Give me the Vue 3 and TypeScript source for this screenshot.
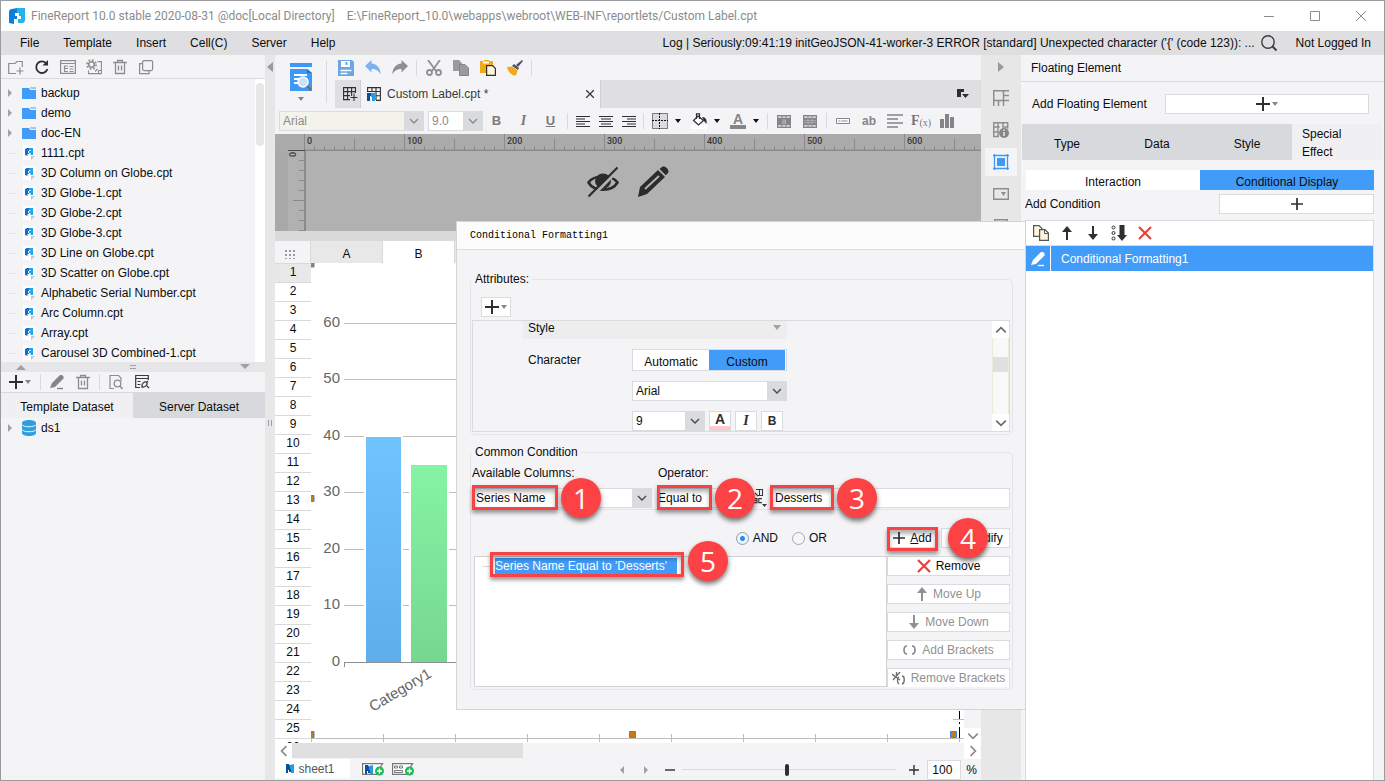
<script setup lang="ts">
import { ref } from 'vue'

interface TreeItem {
  name: string
  folder: boolean
}

const menus = ['File', 'Template', 'Insert', 'Cell(C)', 'Server', 'Help']

const tree: TreeItem[] = [
  { name: 'backup', folder: true },
  { name: 'demo', folder: true },
  { name: 'doc-EN', folder: true },
  { name: '1111.cpt', folder: false },
  { name: '3D Column on Globe.cpt', folder: false },
  { name: '3D Globe-1.cpt', folder: false },
  { name: '3D Globe-2.cpt', folder: false },
  { name: '3D Globe-3.cpt', folder: false },
  { name: '3D Line on Globe.cpt', folder: false },
  { name: '3D Scatter on Globe.cpt', folder: false },
  { name: 'Alphabetic Serial Number.cpt', folder: false },
  { name: 'Arc Column.cpt', folder: false },
  { name: 'Array.cpt', folder: false },
  { name: 'Carousel 3D Combined-1.cpt', folder: false },
]

const columns = ['A', 'B', 'C', 'D', 'E', 'F', 'G', 'H', 'I']
const rows = Array.from({ length: 26 }, (_, i) => i + 1)

const hTicks = Array.from({ length: 68 }, (_, i) => i * 10)
const vTicks = Array.from({ length: 9 }, (_, i) => i * 10)
const hLabels = hTicks.filter((t) => t % 100 === 0)

const axis = [60, 50, 40, 30, 20, 10, 0].map((value, i) => ({ value, y: [60, 116, 173, 229, 286, 342, 399][i] }))
const gridX = Array.from({ length: 24 }, (_, i) => i * 72)

const zoom = ref('100')
const zoomLevel = ref(49)
const join = ref('and')
const compare = ref('Desserts')
</script>

<template>
  <div class="window">
    <svg class="defs" aria-hidden="true">
      <symbol id="i-file" viewBox="0 0 12 14">
        <path d="M0 0h12v9l-4 5H0z" fill="#fff" />
        <path d="M8 14V10h4z" fill="#c4c6c9" />
        <path d="M2 3l2-1h2v3H5v2h1v1H4.500v2L2 9z" fill="#0b6fd0" />
        <path d="M6 2h4v7H7.500V7H6V5h1.500V4H6z" fill="#1fa5ea" />
      </symbol>
      <symbol id="i-logo" viewBox="0 0 16 16">
        <path d="M0 4c0-2 1-3 3-3l5-1v5H6v3h2v3H5v5l-5-1z" fill="#0a80d8" />
        <path d="M8 0h8v12c0 2-1 3-3 3H9v-4h3V8h-2V5H8z" fill="#27b0ee" />
      </symbol>
      <symbol id="i-finer" viewBox="0 0 8 9">
        <path d="M0 0h3l2 4v4H3V6H2v3H0z" fill="#0a4f9e" />
        <path d="M4 1l4-1v9H5V5H4z" fill="#1f9fe0" />
      </symbol>
      <symbol id="i-chev" viewBox="0 0 10 10">
        <path d="M1 3l4 4 4-4" fill="none" stroke="currentColor" stroke-width="1.4" />
      </symbol>
      <symbol id="i-plus" viewBox="0 0 14 14">
        <path d="M7 0v14M0 7h14" stroke="#2f2f31" stroke-width="2" />
      </symbol>
      <symbol id="i-caret" viewBox="0 0 6 4">
        <path d="M0 0h6L3 4z" fill="currentColor" />
      </symbol>
      <symbol id="i-x" viewBox="0 0 14 14">
        <path d="M1 1l12 12M13 1L1 13" stroke="#e8423c" stroke-width="2.2" />
      </symbol>
      <symbol id="i-up" viewBox="0 0 12 14">
        <path d="M6 14V3" stroke="currentColor" stroke-width="2" />
        <path d="M6 0l5 6H1z" fill="currentColor" />
      </symbol>
      <symbol id="i-trash" viewBox="0 0 16 16">
        <path d="M1 3.500h14M5.500 3V1.500h5V3M3.500 4v10.500h9V4M6.500 6.500v5M9.500 6.500v5" fill="none" stroke="#8d8d8f" stroke-width="1.3" />
      </symbol>
      <symbol id="i-pencil" viewBox="0 0 16 16">
        <path d="M1 14l2-5 7-7 1-1h2l1.500 1.500v2L13 6l-7 7z" fill="currentColor" />
        <path d="M8 14.500h6" stroke="currentColor" stroke-width="1.400" />
      </symbol>
    </svg>

    <header class="title">
      <svg width="16" height="16"><use href="#i-logo" /></svg>
      <span class="title-name">FineReport 10.0 stable 2020-08-31 @doc[Local Directory]</span>
      <span>E:\FineReport_10.0\webapps\webroot\WEB-INF\reportlets/Custom Label.cpt</span>
      <span class="grow"></span>
      <button class="win" aria-label="Minimize"><svg width="12" height="12"><path d="M1 6.500h10" stroke="#8b8b8b" /></svg></button>
      <button class="win" aria-label="Maximize"><svg width="12" height="12"><path d="M1.500 1.500h9v9h-9z" stroke="#8b8b8b" fill="none" /></svg></button>
      <button class="win" aria-label="Close"><svg width="12" height="12"><path d="M1 1l10 10M11 1L1 11" stroke="#8b8b8b" /></svg></button>
    </header>

    <nav class="menubar">
      <button v-for="m in menus" :key="m">{{ m }}</button>
      <span class="grow"></span>
      <span>Log | Seriously:09:41:19 initGeoJSON-41-worker-3 ERROR [standard] Unexpected character ('{' (code 123)): ...</span>
      <button class="search" aria-label="Search">
        <svg width="18" height="18"><circle cx="8" cy="8" r="6.200" fill="none" stroke="#3d3d3f" stroke-width="1.400" /><path d="M12.500 12.500l4 4" stroke="#3d3d3f" stroke-width="2" /></svg>
      </button>
      <button>Not Logged In</button>
    </nav>

    <div class="main">
      <aside class="left">
        <div class="tools">
          <button aria-label="New folder"><svg width="16" height="16"><path d="M8 14.500H.7v-10H7l2-2h5.300V8M12 8.500v7M8.500 12h7" fill="none" stroke="#8d8d8f" stroke-width="1.200" /></svg></button>
          <button aria-label="Refresh"><svg width="16" height="16"><path d="M12.500 4.500A5.800 5.800 0 1 0 13.500 10" fill="none" stroke="#2f2f31" stroke-width="1.800" /><path d="M14 1v5.500H8.500z" fill="#2f2f31" /></svg></button>
          <button aria-label="Open location"><svg width="16" height="16"><path d="M.6 1.600h14.800v12.800H.6zM.6 4.500h14.800M4 7h4M4 12.500h4M4.500 7v5M9.500 7.500h4M9.500 10h4M9.500 12.500h4M5 9.500h3" fill="none" stroke="#8d8d8f" stroke-width="1.200" /></svg></button>
          <button aria-label="Settings"><svg width="16" height="16"><circle cx="5.500" cy="5.500" r="2.800" fill="none" stroke="#8d8d8f" stroke-width="1.600" /><circle cx="5.500" cy="5.500" r="4.600" fill="none" stroke="#8d8d8f" stroke-width="1.600" stroke-dasharray="1.800 1.800" /><path d="M11.500 2.600h3.900v12H2.500v-3M9 12.500l2.500-2.500M12.500 14.500v-3h3" fill="none" stroke="#8d8d8f" stroke-width="1.100" /></svg></button>
          <button aria-label="Delete"><svg width="16" height="16"><use href="#i-trash" /></svg></button>
          <button aria-label="Copy"><svg width="16" height="16"><rect x="4.600" y="1.600" width="10" height="10" rx="1.500" fill="none" stroke="#8d8d8f" stroke-width="1.200" /><path d="M4 4.600H1.600v10h9.500V12" fill="none" stroke="#8d8d8f" stroke-width="1.200" /></svg></button>
        </div>
        <div class="tree-wrap">
          <ul class="tree">
            <li v-for="t in tree" :key="t.name">
              <svg class="twist" width="17" height="10"><path v-if="t.folder" d="M2 1l4 4-4 4z" fill="#a2a2a4" /><path v-else d="M2 5.500h8" stroke="#e7e7ea" /></svg>
              <svg v-if="t.folder" class="ico" width="14" height="12"><path d="M0 1h7l1.500 2H14v9H0z" fill="#419bf9" /><path d="M8 .5h6v1H9z" fill="#419bf9" /></svg>
              <svg v-else class="ico" width="14" height="14"><use href="#i-file" width="12" height="14" x="1" /></svg>
              <span>{{ t.name }}</span>
            </li>
          </ul>
          <div class="tree-scroll"><span></span></div>
        </div>
        <div class="hsplit">
          <svg width="10" height="6"><path d="M0 6l5-5 5 5z" fill="#a0a0a2" /></svg>
          <svg width="6" height="5"><path d="M0 .5h6M0 3.500h6" stroke="#a0a0a2" /></svg>
          <svg width="10" height="6"><path d="M0 0l5 5 5-5z" fill="#a0a0a2" /></svg>
        </div>
        <div class="tools data-tools">
          <button class="add-data" aria-label="Add dataset"><svg width="14" height="14"><use href="#i-plus" /></svg><svg class="gray" width="6" height="4"><use href="#i-caret" /></svg></button>
          <i class="sep"></i>
          <button aria-label="Edit"><svg class="gray" width="16" height="16"><use href="#i-pencil" /></svg></button>
          <button aria-label="Delete dataset"><svg width="16" height="16"><use href="#i-trash" /></svg></button>
          <i class="sep"></i>
          <button aria-label="Preview"><svg width="16" height="16"><path d="M6 14.500H2v-13h8.500L13 4v3" fill="none" stroke="#8d8d8f" stroke-width="1.200" /><circle cx="9.500" cy="9.500" r="3.300" fill="none" stroke="#8d8d8f" stroke-width="1.300" /><path d="M12 12l2.500 3" stroke="#8d8d8f" stroke-width="1.500" /></svg></button>
          <button aria-label="Connection"><svg width="16" height="16"><path d="M6 13.500H1.700v-12h12.600V6M1.700 4.500h12.600M3.500 7.500h3M3.500 10.500h3" fill="none" stroke="#3a3a3c" stroke-width="1.200" /><ellipse cx="10.500" cy="10.500" rx="3" ry="2" transform="rotate(-45 10.500 10.500)" fill="none" stroke="#3a3a3c" stroke-width="1.200" /><path d="M7.500 13.500l1.500-1.500M12.500 8.500l1.500-1.500M13 12l2 2" stroke="#3a3a3c" stroke-width="1.200" /></svg></button>
        </div>
        <div class="data-tabs">
          <button class="on">Template Dataset</button>
          <button>Server Dataset</button>
        </div>
        <ul class="tree flat">
          <li>
            <svg class="twist" width="17" height="10"><path d="M2 1l4 4-4 4z" fill="#a2a2a4" /></svg>
            <svg class="ico" width="14" height="16"><path d="M0 3c0-4 14-4 14 0v10c0 4-14 4-14 0z" fill="#2c9fe0" /><path d="M0 4.500c1 3 13 3 14 0M0 9.500c1 3 13 3 14 0" fill="none" stroke="#f4f4f7" /></svg>
            <span>ds1</span>
          </li>
        </ul>
      </aside>

      <div class="vsplit">
        <svg width="6" height="10"><path d="M6 0v10L0 5z" fill="#9a9a9c" /></svg>
        <svg width="4" height="6"><path d="M.5 0v6M3.500 0v6" stroke="#a0a0a2" /></svg>
        <span></span>
      </div>

      <section class="center">
        <div class="top">
          <button class="preview" aria-label="Preview template">
            <svg width="22" height="28"><path d="M0 0h22v4H0zM0 6h17l5 4v18H0z" fill="#3e98f8" /><path d="M17 6v4h5z" fill="#1672d6" /><path d="M4 12h13M4 16h6M4 20h5" stroke="#fff" stroke-width="2" /><circle cx="13" cy="19" r="5" fill="#c9e2fb" stroke="#fff" stroke-width="1.500" /><path d="M17 23l4 4" stroke="#7b6a58" stroke-width="2.200" /></svg>
            <svg class="gray" width="6" height="4"><use href="#i-caret" /></svg>
          </button>
          <div class="top-right">
            <div class="bar">
              <button aria-label="Save"><svg width="16" height="16"><path d="M0 0h14l2 2v14H0z" fill="#6ba6e6" /><path d="M3 1h9v6H3z" fill="#fff" /><path d="M8.500 2v3" stroke="#6ba6e6" stroke-width="2" /><path d="M2.500 10.500h11M2.500 13.500h7" stroke="#fff" stroke-width="1.300" /></svg></button>
              <button aria-label="Undo"><svg width="16" height="16"><path d="M0 6l6.500-6v3.500C12 4 15.500 8 15.700 14.500 13.500 10.500 11 9 6.500 9v3.500z" fill="#7cb2ee" /></svg></button>
              <button aria-label="Redo"><svg width="16" height="16"><path d="M16 6L9.500 0v3.500C4 4 .5 8 .3 14.500 2.500 10.500 5 9 9.500 9v3.500z" fill="#8f8f91" /></svg></button>
              <i class="sep"></i>
              <button aria-label="Cut"><svg width="16" height="16"><path d="M2 0l8 11M14 0L6 11" stroke="#8f8f91" stroke-width="1.800" /><circle cx="3.500" cy="12.500" r="2.500" fill="none" stroke="#8f8f91" stroke-width="1.800" /><circle cx="12.500" cy="12.500" r="2.500" fill="none" stroke="#8f8f91" stroke-width="1.800" /></svg></button>
              <button aria-label="Copy cell"><svg width="16" height="16"><path d="M0 0h6l3 3v8H0z" fill="#9b9b9d" /><path d="M6.500 4.500h5.500l3.500 3.500v7.500h-9z" fill="#9b9b9d" stroke="#858587" /></svg></button>
              <button aria-label="Paste"><svg width="16" height="16"><path d="M0 1h4V0h5v1h4v12H0z" fill="#f0a91b" /><path d="M3 1.500h6v2H3z" fill="#fff" /><path d="M6.600 5.600h6l2.800 3v6.800H6.600z" fill="#fff6dc" stroke="#2f2f31" stroke-width="1.200" /></svg></button>
              <button aria-label="Format brush"><svg width="16" height="16"><path d="M15 0l1 1-5 6-2-2z" fill="#4d5366" /><path d="M7 4l5 4-1 2-6-4z" fill="#4d5366" /><path d="M5 6.500l5.500 4-1.500 5C5 16 1 12 0 7z" fill="#f0a91b" /></svg></button>
              <i class="sep"></i>
            </div>
            <div class="tabs">
              <button class="new-tab" aria-label="New template"><svg width="16" height="14"><path d="M1 .6h13M1 4.600h13M1 8.600h7M1 12.600h7M1.600 0v13M5.600 0v13M9.600 0v9M13.500 0v6M12 6.500v7.500M8.500 10.500h7" stroke="#2f2f31" stroke-width="1.100" /></svg></button>
              <div class="doc-tab">
                <svg width="14" height="14"><path d="M.6 4.500V.6h12.800v12.800H9M0 4.500h13M5 .6v4M9 .6v12.400M9 8.700h4.500" fill="none" stroke="#2f2f31" stroke-width="1.100" /><path d="M0 6h4v3H3v5H0z" fill="#0a4f9e" /><path d="M4 6h4v8H5v-4H4z" fill="#1f9fe0" /></svg>
                <span>Custom Label.cpt *</span>
                <button aria-label="Close tab"><svg width="8" height="8"><path d="M0 0l8 8M8 0L0 8" stroke="#3a3a3c" stroke-width="1.300" /></svg></button>
              </div>
              <span class="grow"></span>
              <button class="tab-list" aria-label="Open templates"><svg width="12" height="10"><path d="M0 0h7v3H4v5H0z" fill="#2f2f31" /><path d="M5 5h7L8.500 9z" fill="#2f2f31" /></svg></button>
            </div>
          </div>
        </div>

        <div class="format">
          <label class="combo font"><select aria-label="Font" disabled><option>Arial</option></select><b><svg width="10" height="10"><use href="#i-chev" /></svg></b></label>
          <label class="combo size"><select aria-label="Font size" disabled><option>9.0</option></select><b><svg width="10" height="10"><use href="#i-chev" /></svg></b></label>
          <button class="f27 bold">B</button>
          <button class="f27 ital">I</button>
          <button class="f27 under">U</button>
          <i class="sep"></i>
          <button class="f23" aria-label="Align left"><svg width="14" height="11"><path d="M0 .5h14M0 3h9M0 5.500h14M0 8h9M0 10.500h14" stroke="#2f2f31" /></svg></button>
          <button class="f23" aria-label="Align center"><svg width="14" height="11"><path d="M0 .5h14M2 3h10M0 5.500h14M2 8h10M0 10.500h14" stroke="#2f2f31" /></svg></button>
          <button class="f23" aria-label="Align right"><svg width="14" height="11"><path d="M0 .5h14M5 3h9M0 5.500h14M5 8h9M0 10.500h14" stroke="#2f2f31" /></svg></button>
          <i class="sep"></i>
          <button class="f39" aria-label="Border"><svg width="16" height="16"><path d="M.5.500h15v15H.5z" fill="#dcdcde" stroke="#111" stroke-dasharray="1 1" /><path d="M7.500 0v16M0 7.500h16" stroke="#111" stroke-dasharray="2 1" /></svg><svg class="dark" width="6" height="4"><use href="#i-caret" /></svg></button>
          <button class="f39" aria-label="Fill"><svg width="16" height="16"><path d="M0 12h16v4H0z" fill="#fff" /><path d="M7 3l5.500 4.500L7.500 12 2.500 7.500z" fill="#fff" stroke="#2f2f31" stroke-width="1.200" /><path d="M5.500 6V.800h3V6" fill="none" stroke="#2f2f31" stroke-width="1.200" /><path d="M11 4c4 0 5 3 4.500 7l-2.500-3z" fill="#2f2f31" /></svg><svg class="dark" width="6" height="4"><use href="#i-caret" /></svg></button>
          <button class="f39" aria-label="Font color"><span class="acolor">A</span><svg class="dark" width="6" height="4"><use href="#i-caret" /></svg></button>
          <i class="sep"></i>
          <button class="f26" aria-label="Merge"><svg width="14" height="13"><path d="M.6.600h12.800v11.800H.6z" fill="#d4d4d6" stroke="#858587" stroke-width="1.200" /><path d="M1 3h12v7H1z" fill="#858587" /><path d="M5 0v3M9 0v3M5 10v3M9 10v3" stroke="#858587" /><path d="M5.500 5h3v3.500h-3v-2h3" fill="none" stroke="#b4b4b6" /></svg></button>
          <button class="f26" aria-label="Unmerge"><svg width="14" height="13"><path d="M.6.600h12.800v11.800H.6z" fill="#d4d4d6" stroke="#858587" stroke-width="1.200" /><path d="M1 3h12v7H1z" fill="#858587" /><path d="M5 0v3M9 0v3M5 10v3M9 10v3" stroke="#858587" /><path d="M5 3v7M9 3v7M1 5.500h12M1 7.500h12" stroke="#bcbcbe" stroke-width=".6" /></svg></button>
          <i class="sep"></i>
          <button class="f26" aria-label="Widget"><svg width="14" height="6"><path d="M.5.500h13v5H.5z" fill="#fff" stroke="#858587" /><path d="M2.500 3h2M5.500 3h6" stroke="#858587" stroke-width="1.200" /></svg></button>
          <button class="f26 ab">ab</button>
          <button class="f26" aria-label="Rich text"><svg width="16" height="14"><path d="M0 1h16M0 5h11M0 9h16M0 13h11" stroke="#858587" stroke-width="1.500" /></svg></button>
          <button class="f26 fx">F<small>(x)</small></button>
          <button class="f26" aria-label="Chart"><svg width="14" height="14"><path d="M0 5h4v9H0zM5 0h4v14H5zM10 3h4v11h-4z" fill="#858587" /></svg></button>
        </div>

        <div class="stage">
          <svg class="ruler-h" height="20">
            <path d="M29.500 0v17M13 16.500h17" stroke="#4c4c4e" />
            <path d="M30 16.500h4000" stroke="#8a8a8a" stroke-width="2" />
            <path v-for="t in hTicks" :key="t" :d="`M${t + 29.5} ${t % 100 === 0 ? 0 : t % 50 === 0 ? 5 : 12}V16`" stroke="#8a8a8a" />
            <text v-for="l in hLabels" :key="l" :x="l + 32" y="10">{{ l }}</text>
          </svg>
          <div class="stage-row">
            <svg class="ruler-v" width="31">
              <path d="M0 0h13v100H0z" fill="#a9a9a9" />
              <path d="M30 0v100" stroke="#8a8a8a" stroke-width="2" />
              <path v-for="t in vTicks" :key="t" :d="`M${t % 50 === 0 ? 18 : 24} ${t - 0.5}H29`" stroke="#8a8a8a" />
              <text transform="translate(21 6) rotate(-90)">0</text>
            </svg>
          </div>
          <div class="overlay">
            <svg width="32" height="32" viewBox="0 0 32 32"><path d="M1.500 16.500C7 8.500 25 8.500 30.500 16.500 25 26 7 26 1.500 16.500z" fill="none" stroke="#2b2b2b" stroke-width="2.600" /><path d="M8 15a8 7.500 0 0 1 16 0 8 7.500 0 0 1-16 0z" fill="#2b2b2b" /><path d="M32 3.500L4 31.500" stroke="#b1b1b1" stroke-width="3" /><path d="M30.500 1.500L1.500 30.500" stroke="#2b2b2b" stroke-width="2.200" /></svg>
            <svg width="32" height="32" viewBox="0 0 32 32"><path d="M1 31l2-10L21 4l7 7L10 28z" fill="#2b2b2b" /><path d="M8 23L22 10" stroke="#b1b1b1" stroke-width="2" /><path d="M22.500 3L25 1c3-2 8 3 6 6l-2.500 2.500z" fill="#2b2b2b" /><path d="M22 3.500l6.500 6.500" stroke="#b1b1b1" stroke-width="1.300" /></svg>
          </div>
        </div>

        <div class="sheet">
          <div class="cols">
            <span class="corner"><svg width="11" height="9"><path d="M0 1h11M0 5h11M0 9h11" stroke="#9b9b9d" stroke-width="2" stroke-dasharray="2 2" /></svg></span>
            <span v-for="c in columns" :key="c" class="col" :class="{ sel: c === 'B' }">{{ c }}</span>
          </div>
          <div class="cells">
            <ol class="rows"><li v-for="r in rows" :key="r">{{ r }}</li></ol>
            <svg class="chart">
              <defs>
                <linearGradient id="g-blue" x2="0" y2="1"><stop offset="0" stop-color="#6fc3ff" /><stop offset="1" stop-color="#5faeea" /></linearGradient>
                <linearGradient id="g-green" x2="0" y2="1"><stop offset="0" stop-color="#85f3a4" /><stop offset="1" stop-color="#76d890" /></linearGradient>
              </defs>
              <g v-for="a in axis" :key="a.value">
                <path :d="`M33 ${a.y + 0.5}H640`" :stroke="a.value ? '#bfbfbf' : '#8e8e8e'" />
                <text x="29" :y="a.y + 4" text-anchor="end">{{ a.value }}</text>
              </g>
              <path d="M33.500 399v5" stroke="#8e8e8e" />
              <path d="M53 172h39v227H53zM98 200h40v199H98z" fill="#fff" />
              <path d="M55 174h35v225H55z" fill="url(#g-blue)" />
              <path d="M100 202h36v197h-36z" fill="url(#g-green)" />
              <text transform="translate(62 449) rotate(-31)">Category1</text>
              <path d="M0 475.500h653" stroke="#bdbdbd" />
              <path v-for="g in gridX" :key="g" :d="`M${g + 0.5} 471v9`" stroke="#bdbdbd" />
              <path d="M642 456.500h12" stroke="#bdbdbd" />
              <path d="M648.500 448v8M648.500 459v2M648.500 464v11" stroke="#000" stroke-width="1" />
              <path d="M-4-4h7v8h-7zM-4 232.500h7v6h-7zM-4 468.500h7v6h-7zM318.500 468.500h6v6h-6zM639.500 468.500h6v6h-6z" fill="#c87a0c" stroke="#3b85e6" />
            </svg>
            <div class="vscroll"><button aria-label="Scroll down"><svg width="12" height="12"><use href="#i-chev" /></svg></button></div>
          </div>
        </div>

        <div class="hscroll">
          <button aria-label="Scroll left"><svg class="rl" width="12" height="12"><use href="#i-chev" /></svg></button>
          <span class="thumb"></span>
          <span class="grow"></span>
          <button aria-label="Scroll right"><svg class="rr" width="12" height="12"><use href="#i-chev" /></svg></button>
        </div>
        <footer class="status">
          <button class="sheet-tab"><svg width="8" height="9"><use href="#i-finer" /></svg>sheet1</button>
          <button class="add-sheet" aria-label="Add sheet"><svg width="22" height="13"><path d="M.6.600h20L18 5v6.400H.6z" fill="#fff" stroke="#77777a" stroke-width="1.200" /><use href="#i-finer" x="3" y="2" width="8" height="9" /><circle cx="17.500" cy="8" r="4.500" fill="#1fb956" /><path d="M17.500 5.500v5M15 8h5" stroke="#fff" stroke-width="1.400" /></svg></button>
          <button class="add-sheet" aria-label="Add form"><svg width="22" height="13"><path d="M.6.600h20L18 5v6.400H.6z" fill="#fff" stroke="#77777a" stroke-width="1.200" /><path d="M2.500 3h3v2h-3zM7.500 3h3v2h-3zM2.500 7.500h8v2h-8z" fill="none" stroke="#77777a" /><circle cx="17.500" cy="8" r="4.500" fill="#1fb956" /><path d="M17.500 5.500v5M15 8h5" stroke="#fff" stroke-width="1.400" /></svg></button>
          <span class="grow"></span>
          <button class="nav" aria-label="Previous sheet"><svg width="4" height="8"><path d="M4 0v8L0 4z" fill="#a2a2a4" /></svg></button>
          <button class="nav" aria-label="Next sheet"><svg width="4" height="8"><path d="M0 0v8l4-4z" fill="#a2a2a4" /></svg></button>
          <button class="nav" aria-label="Zoom out"><svg width="10" height="10"><path d="M0 5h10" stroke="#2f2f31" stroke-width="1.400" /></svg></button>
          <input v-model="zoomLevel" class="slider" type="range" min="0" max="100" aria-label="Zoom" />
          <button class="nav" aria-label="Zoom in"><svg width="10" height="10"><path d="M0 5h10M5 0v10" stroke="#2f2f31" stroke-width="1.400" /></svg></button>
          <label class="pct"><input v-model="zoom" aria-label="Zoom percent" />%</label>
        </footer>
      </section>

      <nav class="strip">
        <button class="fold" aria-label="Collapse panel"><svg width="6" height="10"><path d="M0 0v10l6-5z" fill="#9a9a9c" /></svg></button>
        <button aria-label="Cell element"><svg width="16" height="16"><path d="M16 .700H.7V16M10.500.700v9.800H1M16 5.500h-5M16 10.500h-5M5.500 10.500V16M10.500 10.500V16" fill="none" stroke="#8d8d8f" stroke-width="1.500" /></svg></button>
        <button aria-label="Cell attributes"><svg width="16" height="16"><path d="M6 14.500H.7V.700h14v6M.7 5h6M.7 10h4M5 .7v14M10 .7v5M10 5h5" fill="none" stroke="#8d8d8f" stroke-width="1.400" /><circle cx="11" cy="11" r="5" fill="#858587" /><path d="M11 7.500v1.500M11 10v4" stroke="#e8e8e8" stroke-width="1.500" /></svg></button>
        <button class="on" aria-label="Floating element"><svg width="16" height="16"><path d="M0 1.500h16M0 14.500h16M1.500 0v16M14.500 0v16" stroke="#3e98f8" stroke-width="1.300" /><path d="M4 4h8v8H4z" fill="#3e98f8" /></svg></button>
        <button aria-label="Widget settings"><svg width="16" height="12"><path d="M.7.700h14.600v10.600H.7z" fill="none" stroke="#8d8d8f" stroke-width="1.400" /><path d="M8 4h5l-2.500 4z" fill="#8d8d8f" /></svg></button>
        <button aria-label="Conditions"><svg width="14" height="14"><path d="M.7.700h12.600v12.600H.7z" fill="none" stroke="#8d8d8f" stroke-width="1.400" /></svg></button>
      </nav>

      <aside class="right">
        <h2>Floating Element</h2>
        <div class="add-float"><span>Add Floating Element</span><button class="box" aria-label="Add floating element"><svg width="14" height="14"><use href="#i-plus" /></svg><svg class="gray" width="6" height="4"><use href="#i-caret" /></svg></button></div>
        <div class="ptabs"><button>Type</button><button>Data</button><button>Style</button><button class="on">Special Effect</button></div>
        <div class="subtabs"><button>Interaction</button><button class="on">Conditional Display</button></div>
        <div class="add-cond"><span>Add Condition</span><button class="box" aria-label="Add condition"><svg width="12" height="12"><use href="#i-plus" /></svg></button></div>
        <div class="cond-list">
          <div class="cond-tools">
            <button aria-label="Copy condition"><svg width="16" height="16"><path d="M.6.600h5.400l3 3v7.800H.6z" fill="#fff6dc" stroke="#55555a" stroke-width="1.200" /><path d="M6.600 4.600h5.400l3.400 3.400v7.400H6.600z" fill="#fff6dc" stroke="#55555a" stroke-width="1.200" /><path d="M11.500 4.600v4h4" fill="none" stroke="#55555a" /></svg></button>
            <button aria-label="Move condition up"><svg width="12" height="14"><use href="#i-up" /></svg></button>
            <button aria-label="Move condition down"><svg class="flip" width="12" height="14"><use href="#i-up" /></svg></button>
            <button aria-label="Sort"><svg width="16" height="16"><path d="M8.500 0h5v10H16l-5 6-5-6h2.500z" fill="#2f2f31" /><circle cx="2.500" cy="2.500" r="1.500" fill="none" stroke="#2f2f31" /><circle cx="2.500" cy="8" r="1.500" fill="none" stroke="#2f2f31" /><circle cx="2.500" cy="13.500" r="1.500" fill="none" stroke="#2f2f31" /></svg></button>
            <button aria-label="Delete condition"><svg width="14" height="14"><use href="#i-x" /></svg></button>
          </div>
          <div class="cond-item"><span class="pen"><svg width="16" height="16"><use href="#i-pencil" /></svg></span><span>Conditional Formatting1</span></div>
        </div>
      </aside>
    </div>

    <div class="dialog" role="dialog" aria-label="Conditional Formatting1">
      <h1>Conditional Formatting1</h1>
      <div class="dialog-body">
        <fieldset>
          <legend>Attributes:</legend>
          <button class="box attr-add" aria-label="Add attribute"><svg width="14" height="14"><use href="#i-plus" /></svg><svg class="gray" width="6" height="4"><use href="#i-caret" /></svg></button>
          <div class="attrs">
            <div class="attr-form">
              <div class="style-head"><span>Style</span><svg width="8" height="5"><path d="M0 0h8L4 5z" fill="#a2a2a4" /></svg></div>
              <div class="attr-grid">
                <span class="char">Character</span>
                <div class="seg"><button>Automatic</button><button class="on">Custom</button></div>
                <label class="combo"><select aria-label="Font family"><option>Arial</option></select><b><svg width="10" height="10"><use href="#i-chev" /></svg></b></label>
                <div class="font-row">
                  <label class="combo nine"><select aria-label="Size"><option>9</option></select><b><svg width="10" height="10"><use href="#i-chev" /></svg></b></label>
                  <button class="box a">A</button><button class="box ital">I</button><button class="box bold">B</button>
                </div>
              </div>
            </div>
            <div class="mini-scroll">
              <button aria-label="Scroll up"><svg class="flip" width="12" height="12"><use href="#i-chev" /></svg></button>
              <div><span></span></div>
              <button aria-label="Scroll attributes down"><svg width="12" height="12"><use href="#i-chev" /></svg></button>
            </div>
          </div>
        </fieldset>

        <fieldset class="common">
          <legend>Common Condition</legend>
          <div class="fields labels"><label for="col">Available Columns:</label><label for="op">Operator:</label></div>
          <div class="fields inputs">
            <div class="combo"><select id="col"><option>Series Name</option></select><b><svg width="10" height="10"><use href="#i-chev" /></svg></b></div>
            <div class="combo"><select id="op"><option>Equal to</option></select><b><svg width="10" height="10"><use href="#i-chev" /></svg></b></div>
            <button class="type" aria-label="Value type"><svg width="18" height="20"><path d="M5 1.500h6.500v6H6M8.500 1.500v6M4 5l3 3" fill="none" stroke="#3a3a3c" stroke-width="1.100" /><path d="M3 10.600h3v4H3M3 12.500h3M11 10.600H7.800v4H11" fill="none" stroke="#3a3a3c" stroke-width="1.100" /><path d="M11 16h5l-2.500 3z" fill="#3a3a3c" /></svg></button>
            <input v-model="compare" aria-label="Value" />
          </div>
          <div class="join">
            <label><input v-model="join" type="radio" name="join" value="and" />AND</label>
            <label><input v-model="join" type="radio" name="join" value="or" />OR</label>
            <button class="box add"><svg width="12" height="12"><use href="#i-plus" /></svg><span><u>A</u>dd</span></button>
            <button class="box modify"><svg width="14" height="14"><use href="#i-pencil" /></svg><span>Modify</span></button>
          </div>
          <div class="result">
            <ul><li><span>Series Name Equal to 'Desserts'</span></li></ul>
            <div class="side">
              <button class="box"><svg width="14" height="14"><use href="#i-x" /></svg>Remove</button>
              <button class="box" disabled><svg width="12" height="14"><use href="#i-up" /></svg>Move Up</button>
              <button class="box" disabled><svg class="flip" width="12" height="14"><use href="#i-up" /></svg>Move Down</button>
              <button class="box" disabled><svg width="14" height="10"><path d="M4 1C1 1 1 3 1 5s0 4 3 4M9 1c3 0 3 2 3 4s0 4-3 4" fill="none" stroke="#858587" stroke-width="1.600" /></svg>Add Brackets</button>
              <button class="box" disabled><svg width="14" height="13"><path d="M0 2l8 6M8 0L1 8M4.500 0v4M7 5c-2 1-2 6 0 7M10 4c3 0 3 7 0 8" fill="none" stroke="#6f6f71" stroke-width="1.400" /></svg>Remove Brackets</button>
            </div>
          </div>
        </fieldset>
      </div>

      <div class="mark m1"></div><div class="mark m2"></div><div class="mark m3"></div><div class="mark m4"></div><div class="mark m5"></div>
      <span class="badge b1">1</span><span class="badge b2">2</span><span class="badge b3">3</span><span class="badge b4">4</span><span class="badge b5">5</span>
    </div>
  </div>
</template>

<style>
html, body { margin: 0; height: 100%; overflow: hidden; }
</style>

<style scoped>
.window { position: relative; box-sizing: border-box; height: 100vh; display: flex; flex-direction: column; border: 1px solid #9b9b9d; background: #f4f4f7; color: #0c0c0e; font: 12px/16px "Liberation Sans", Arial, sans-serif; overflow: hidden; }
.window *, .window *::before { box-sizing: border-box; }
.defs { position: absolute; width: 0; height: 0; }
svg { display: block; flex: none; }
button { border: 0; padding: 0; margin: 0; background: none; color: inherit; font: inherit; display: flex; align-items: center; justify-content: center; white-space: nowrap; }
input, select { font: inherit; color: inherit; margin: 0; min-width: 0; }
ul, ol { list-style: none; margin: 0; padding: 0; }
h1, h2 { margin: 0; font: inherit; }
.grow { flex: 1; }
.gray { color: #858587; }
.dark { color: #111; }
.flip { transform: rotate(180deg); }
.sep { flex: none; width: 1px; background: #dadade; }
.box { height: 20px; background: #fff; border: 1px solid #dadbdf; }

.title { flex: none; height: 30px; background: #fff; display: flex; align-items: center; padding-left: 8px; color: #8b8b8b; font-family: Roboto, "Noto Sans", sans-serif; font-size: 12px; white-space: nowrap; }
.title-name { margin: 0 12px 0 6px; }
.win { width: 46px; height: 30px; }
.menubar { flex: none; height: 24px; background: #dfdfe1; display: flex; align-items: center; gap: 24px; padding: 0 13px 0 19px; white-space: nowrap; }
.search { margin: 0 -6px 0 -19px; }
.main { flex: 1; min-height: 0; display: flex; }

.left { flex: none; width: 264px; display: flex; flex-direction: column; }
.tools { flex: none; height: 24px; display: flex; align-items: center; padding-left: 2px; border-bottom: 1px solid #dadade; }
.tools button { width: 26px; height: 20px; }
.tree-wrap { flex: none; height: 283px; display: flex; }
.tree { flex: 1; padding-top: 4px; overflow: hidden; }
.tree.flat { padding: 0; }
.tree li { display: flex; align-items: center; height: 20px; padding-left: 5px; white-space: nowrap; }
.twist { margin-right: -1px; }
.ico { margin-right: 5px; }
.tree-scroll { width: 10px; background: #fff; padding: 4px 1px; }
.tree-scroll span { display: block; height: 63px; border-radius: 4px; background: #e7e7e9; }
.hsplit { flex: none; height: 10px; background: #e6e6e8; display: flex; align-items: center; justify-content: space-between; padding: 0 15px; }
.data-tools { height: 21px; }
.data-tools .add-data { width: 34px; gap: 2px; }
.data-tools .sep { height: 16px; margin: 0 3px; }
.data-tabs { flex: none; display: flex; height: 25px; }
.data-tabs button { flex: 1; background: #d8d9dd; padding-top: 2px; }
.data-tabs .on { background: #f0f0f2; }

.vsplit { flex: none; width: 10px; background: #e7e7e8; display: flex; flex-direction: column; align-items: center; justify-content: space-between; padding: 7px 0; }

.center { flex: 1; min-width: 0; display: flex; flex-direction: column; }
.top { flex: none; display: flex; height: 53px; }
.preview { flex: none; width: 52px; height: 42px; margin: 6px 5px 0 0; border-right: 1px solid #dadade; flex-direction: column; gap: 6px; }
.top-right { flex: 1; min-width: 0; margin-left: 3px; }
.bar { display: flex; height: 25px; align-items: center; margin-left: -3px; }
.bar button { width: 27px; }
.bar .sep { height: 16px; margin: 0 3px; }
.tabs { display: flex; height: 28px; background: #dfdfe1; }
.new-tab { width: 26px; padding-left: 4px; border-right: 1px solid #cfcfd2; }
.doc-tab { display: flex; align-items: center; width: 240px; background: #f4f4f7; border-right: 1px solid #cfcfd2; padding: 0 6px 0 6px; gap: 6px; color: #3a3a3c; }
.doc-tab span { flex: 1; }
.tab-list { width: 36px; }
.format { flex: none; height: 26px; display: flex; align-items: center; padding-left: 4px; }
.format .sep { height: 16px; margin: 0 3px; }
.combo { display: grid; height: 20px; min-width: 0; }
.combo select { grid-area: 1 / 1; width: 100%; height: 20px; appearance: none; border: 1px solid #dadbdf; border-radius: 0; background: #fff; padding: 0 20px 0 3px; opacity: 1; }
.combo b { grid-area: 1 / 1; justify-self: end; width: 20px; background: #dadbdf; display: flex; align-items: center; justify-content: center; color: #48484a; pointer-events: none; }
.format .combo select, .format .combo b { color: #8b8b8d; }
.combo.font { width: 145px; margin-right: 4px; }
.format .combo.font select { background: #f4f3e9; }
.combo.size { width: 55px; }
.f27 { width: 27px; color: #7b7b7d; font-size: 13px; }
.f23 { width: 23px; }
.f26 { width: 26px; }
.f39 { width: 39px; gap: 7px; }
.bold { font-weight: bold; }
.ital { font-family: "Liberation Serif", serif; font-style: italic; font-weight: bold; font-size: 14px; }
.under { text-decoration: underline; font-weight: bold; }
.acolor { width: 16px; height: 16px; border-bottom: 4px solid #858587; color: #858587; font-weight: bold; font-size: 14px; line-height: 12px; text-align: center; }
.ab { font-weight: bold; color: #858587; }
.fx { font-family: "Liberation Serif", serif; color: #77777a; font-size: 14px; font-weight: bold; }
.fx small { font-size: 10px; font-weight: normal; padding-top: 3px; }

.stage { position: relative; flex: none; background: #b1b1b1; height: 97px; overflow: hidden; }
.ruler-h { width: 100%; background: #ababab; height: 17px; }
.stage text { font: 500 9px Roboto, sans-serif; fill: #38383a; }
.stage-row { height: 80px; }
.ruler-v { height: 80px; }
.overlay { position: absolute; inset: 0; display: flex; align-items: center; justify-content: center; gap: 18px; padding-bottom: 2px; }

.sheet { flex: 1; min-height: 0; display: flex; flex-direction: column; background: #fff; border-top: 10px solid #dadadc; }
.cols { flex: none; height: 23px; display: flex; overflow: hidden; padding-right: 17px; background: #f4f4f7; }
.corner, .col { flex: none; width: 72px; display: flex; align-items: center; justify-content: center; background: #e8e8e9; border-right: 1px solid #d9d9db; border-bottom: 1px solid #fff; padding-top: 3px; }
.corner { width: 36px; background: #f4f4f7; border-bottom-color: #d9d9db; padding: 4px 5px 0 0; }
.col.sel { background: #fff; }
.cells { flex: 1; min-height: 0; display: flex; }
.rows { flex: none; width: 36px; height: 100%; overflow: hidden; }
.rows li { height: 19px; border-bottom: 1px solid #d9d9db; text-align: center; line-height: 17px; }
.rows li:first-child { background: #e8e8e9; }
.chart { flex: 1; min-width: 0; width: 0; height: 100%; margin-top: -1px; overflow: hidden; }
.chart text { font-size: 15px; fill: #666; }
.vscroll { flex: none; width: 17px; background: #f4f4f7; display: flex; align-items: flex-end; color: #8b8b8d; }
.vscroll button { width: 17px; height: 15px; background: #fff; }
.hscroll { flex: none; height: 16px; display: flex; color: #8b8b8d; }
.hscroll button { width: 17px; background: #fff; }
.thumb { width: 231px; background: #e0e0e1; height: 15px; }
.rl { transform: rotate(90deg); }
.rr { transform: rotate(-90deg); }
.status { flex: none; height: 21px; display: flex; align-items: center; }
.sheet-tab { width: 75px; height: 19px; background: #fff; gap: 4px; margin-right: 8px; padding-right: 4px; align-self: flex-start; color: #55555a; }
.add-sheet { width: 30px; }
.nav { width: 24px; height: 20px; }
.slider { appearance: none; width: 214px; height: 12px; background: linear-gradient(#dadade, #dadade) center / 100% 1px no-repeat; }
.slider::-webkit-slider-thumb { appearance: none; width: 4px; height: 12px; border-radius: 2px; background: #2f2f31; }
.nav + .slider { margin: 0 6px 0 0; }
.pct { display: flex; align-items: center; gap: 5px; padding-right: 4px; }
.pct input { width: 34px; height: 20px; border: 1px solid #dadbdf; background: #fff; padding: 0 4px; margin-left: 1px; }

.strip { flex: none; width: 40px; background: #e7e7e8; display: flex; flex-direction: column; align-items: center; gap: 4px; }
.strip button { flex: none; width: 32px; height: 28px; }
.strip .fold { height: 24px; margin-bottom: 1px; }
.strip .on { background: #f4f4f7; }

.right { flex: none; width: 363px; display: flex; flex-direction: column; }
.right h2 { height: 27px; line-height: 26px; padding-left: 10px; border-bottom: 1px solid #dadade; }
.add-float { display: flex; align-items: center; padding: 12px 15px 10px 11px; justify-content: space-between; }
.add-float .box { width: 204px; gap: 2px; }
.ptabs { display: flex; height: 36px; margin: 0 2px 0 1px; }
.ptabs button { flex: none; width: 25%; background: #d8d9dd; padding-top: 4px; }
.ptabs .on { background: #f0f0f2; white-space: normal; text-align: left; line-height: 18px; padding: 2px 30px 0 10px; }
.subtabs { display: flex; height: 20px; margin: 10px 10px 0 5px; }
.subtabs button { flex: 1; background: #fff; padding-top: 3px; }
.subtabs .on, .seg .on { background: #419bf9; }
.add-cond { display: flex; justify-content: space-between; align-items: center; margin: 4px 10px 6px 4px; }
.add-cond .box { width: 155px; }
.cond-list { flex: 1; margin: 0 10px 0 4px; border: 1px solid #dadbdf; border-bottom: 0; background: #fff; }
.cond-tools { display: flex; height: 25px; align-items: center; padding-left: 2px; border-bottom: 1px solid #dadbdf; color: #2f2f31; }
.cond-tools button { width: 26px; }
.cond-item { display: flex; align-items: center; height: 25px; background: #419bf9; color: #fff; }
.pen { display: flex; align-items: center; justify-content: center; width: 25px; height: 25px; border-right: 1px solid #fff; margin-right: 10px; }

.dialog { position: absolute; left: 455px; top: 220px; width: 570px; background: #f4f4f7; border: 1px solid #d4d4d7; }
.dialog h1 { height: 28px; background: #fcfcfc; border-bottom: 1px solid #dadade; padding-left: 13px; font: 10px/27px "Liberation Mono", monospace; color: #000; }
.dialog-body { padding: 22px 12px 19px 13px; display: flex; flex-direction: column; gap: 10px; }
fieldset { min-width: 0; margin: 0; padding: 0 2px 2px 1px; border: 1px solid #e5e5e8; border-radius: 5px; }
legend { height: 15px; line-height: 15px; padding: 0 3px; }
.attr-add { width: 30px; margin: 10px 0 3px 9px; gap: 2px; }
.attrs { display: flex; justify-content: space-between; height: 112px; border: 1px solid #dadbdf; overflow: hidden; }
.attr-form { width: 264px; margin-left: 50px; }
.style-head { display: flex; justify-content: space-between; height: 18px; background: #ededee; padding: 0 6px 0 5px; line-height: 15px; }
.style-head svg { margin-top: 4px; }
.attr-grid { display: grid; grid-template-columns: 109px 1fr; row-gap: 10px; margin-top: 10px; }
.char { padding: 3px 5px; }
.attr-grid > .combo, .font-row { grid-column: 2; }
.seg { display: flex; height: 22px; border: 1px solid #dadbdf; background: #fff; padding-right: 1px; }
.seg button { flex: 1; padding-top: 3px; }
.font-row { display: flex; gap: 4px; }
.font-row .nine { width: 73px; }
.font-row .box { width: 22px; color: #2f2f31; }
.font-row .a { font-weight: bold; font-size: 14px; line-height: 14px; box-shadow: inset 0 -5px 0 -1px #ffc9c9; align-items: flex-start; }
.mini-scroll { width: 17px; display: flex; flex-direction: column; color: #6b6b6d; }
.mini-scroll button { height: 17px; background: #fff; }
.mini-scroll div { flex: 1; background: #f9f9f8; border: solid #ebe9d8; border-width: 0 1px; padding-top: 19px; }
.mini-scroll span { display: block; height: 15px; background: #e0e0e1; }
.fields { display: grid; grid-template-columns: 180px 98px 20px 1fr; }
.labels { margin-top: 5px; }
.labels label:last-child { padding-left: 6px; }
.inputs { margin-top: 7px; padding-bottom: 1px; border-bottom: 1px solid #e5e5e8; }
.inputs .combo + .combo { padding-left: 5px; }
.inputs .combo + .combo select { padding-left: 0; }
.inputs input { border: 1px solid #dadbdf; background: #fff; padding: 0 4px; height: 20px; }
.join { display: flex; align-items: center; justify-content: flex-end; margin-top: 18px; }
.join label { display: flex; align-items: center; gap: 4px; margin-right: 14px; }
.join label + label { margin-right: 60px; }
.join input { appearance: none; width: 13px; height: 13px; border: 1px solid #a9a9ac; border-radius: 50%; background: #f6f6f6; }
.join input:checked { background: radial-gradient(circle, #2f86ec 0 2px, #eef4fb 3px); border-color: #8a9cb0; }
.join .add { width: 51px; gap: 5px; margin-right: 3px; }
.join .modify { width: 69px; gap: 5px; }
.result { display: flex; height: 131px; margin: 8px 0 0 2px; }
.result ul { flex: 1; background: #fff; border: 1px solid #d4d4d7; padding: 1px 0 0 7px; }
.result li { display: flex; align-items: center; gap: 5px; color: #fff; }
.result li::before { content: ""; width: 8px; height: 1px; background: #dadade; }
.result li span { background: #419bf9; padding-right: 10px; line-height: 17px; }
.side { width: 123px; display: flex; flex-direction: column; gap: 8px; overflow: hidden; }
.side .box { flex: none; gap: 5px; }
.side .box:disabled { color: #919193; }

.mark { position: absolute; height: 25px; border: 3px solid #fa4244; box-shadow: 0 3px 4px rgba(0, 0, 0, .4), inset 0 4px 4px rgba(0, 0, 0, .3); }
.m1 { left: 15px; top: 263px; width: 86px; }
.m2 { left: 200px; top: 263px; width: 55px; }
.m3 { left: 313px; top: 263px; width: 64px; }
.m4 { left: 430px; top: 305px; width: 51px; height: 24px; }
.m5 { left: 33px; top: 330px; width: 194px; }
.badge { position: absolute; width: 40px; height: 40px; border-radius: 50%; background: #fc4244; color: #fff; font: 500 28px/40px "Open Sans", sans-serif; text-align: center; box-shadow: 0 3px 5px rgba(0, 0, 0, .55); }
.b1 { left: 104px; top: 256px; }
.b2 { left: 258px; top: 256px; }
.b3 { left: 380px; top: 256px; }
.b4 { left: 491px; top: 296px; }
.b5 { left: 231px; top: 319px; }
</style>
